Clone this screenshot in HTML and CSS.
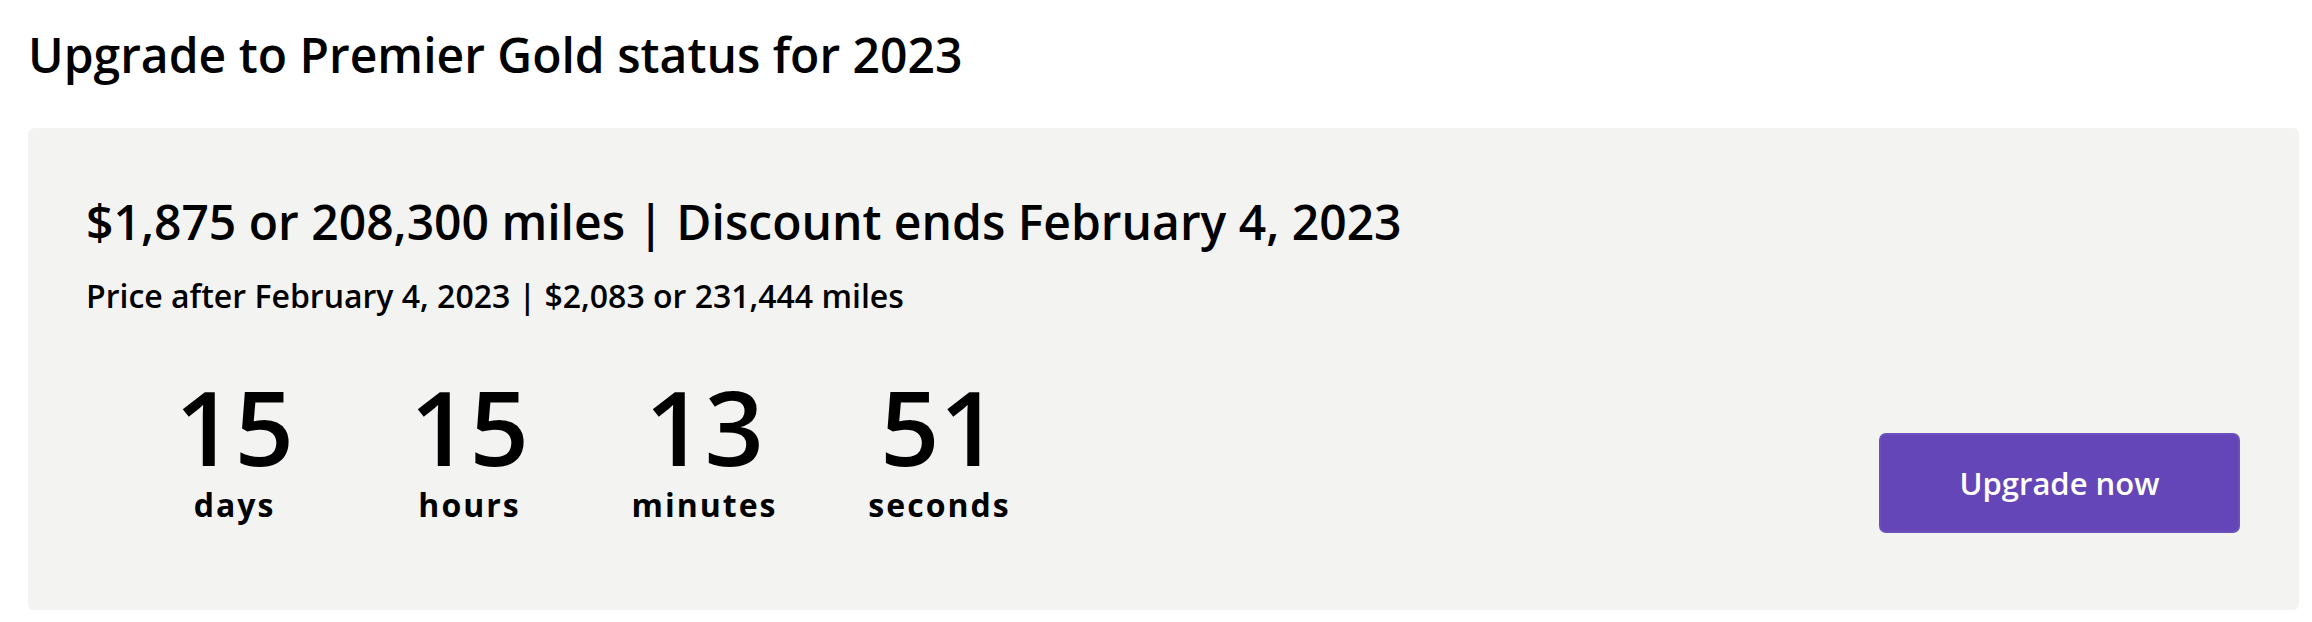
FILE: index.html
```html
<!DOCTYPE html>
<html lang="en">
<head>
<meta charset="utf-8">
<title>Upgrade to Premier Gold</title>
<link rel="stylesheet" href="styles.css">
</head>
<body>
<div class="page">
  <h1 class="title">Upgrade to Premier Gold status for 2023</h1>
  <section class="offer">
    <h2 class="offer-price">$1,875 or 208,300 miles | Discount ends February 4, 2023</h2>
    <p class="offer-after">Price after February 4, 2023 | $2,083 or 231,444 miles</p>
    <div class="offer-row">
      <div class="countdown">
        <div class="unit"><div class="unit-num">15</div><div class="unit-label">days</div></div>
        <div class="unit"><div class="unit-num">15</div><div class="unit-label">hours</div></div>
        <div class="unit"><div class="unit-num">13</div><div class="unit-label">minutes</div></div>
        <div class="unit"><div class="unit-num">51</div><div class="unit-label">seconds</div></div>
      </div>
      <button class="upgrade-btn" type="button">Upgrade now</button>
    </div>
  </section>
</div>
</body>
</html>
```

FILE: styles.css
```css
html, body {
  margin: 0;
  padding: 0;
  background: #ffffff;
}

body {
  font-family: "Open Sans", "Noto Sans", "Liberation Sans", sans-serif;
  color: #000000;
}

.page {
  padding: 0 13px 0 28px;
}

.title {
  margin: 0;
  padding-top: 22px;
  font-size: 48px;
  font-weight: 600;
  line-height: normal;
}

.offer {
  margin-top: 41px;
  background: #f3f3f2;
  border-radius: 6px;
  padding: 61px 59px 77px 58px;
}

.offer-price {
  margin: 0;
  font-size: 48px;
  font-weight: 600;
  line-height: normal;
}

.offer-after {
  margin: 20px 0 0;
  font-size: 32px;
  font-weight: 600;
  line-height: normal;
}

.offer-row {
  display: flex;
  align-items: flex-start;
  justify-content: space-between;
  margin-top: 54px;
}

.countdown {
  display: flex;
  padding-left: 31px;
}

.unit {
  width: 235px;
  text-align: center;
}

.unit-num {
  font-size: 104px;
  font-weight: 600;
  line-height: 110px;
}

.unit-label {
  margin-top: 4px;
  font-size: 32px;
  font-weight: 700;
  line-height: 40px;
  letter-spacing: 2px;
}

.upgrade-btn {
  margin-top: 62px;
  width: 361px;
  height: 100px;
  background: #6446b8;
  border: 2px solid #6b50bb;
  border-radius: 7px;
  color: #ffffff;
  font-family: "Open Sans", "Noto Sans", "Liberation Sans", sans-serif;
  font-size: 31px;
  font-weight: 600;
  cursor: pointer;
}
```
